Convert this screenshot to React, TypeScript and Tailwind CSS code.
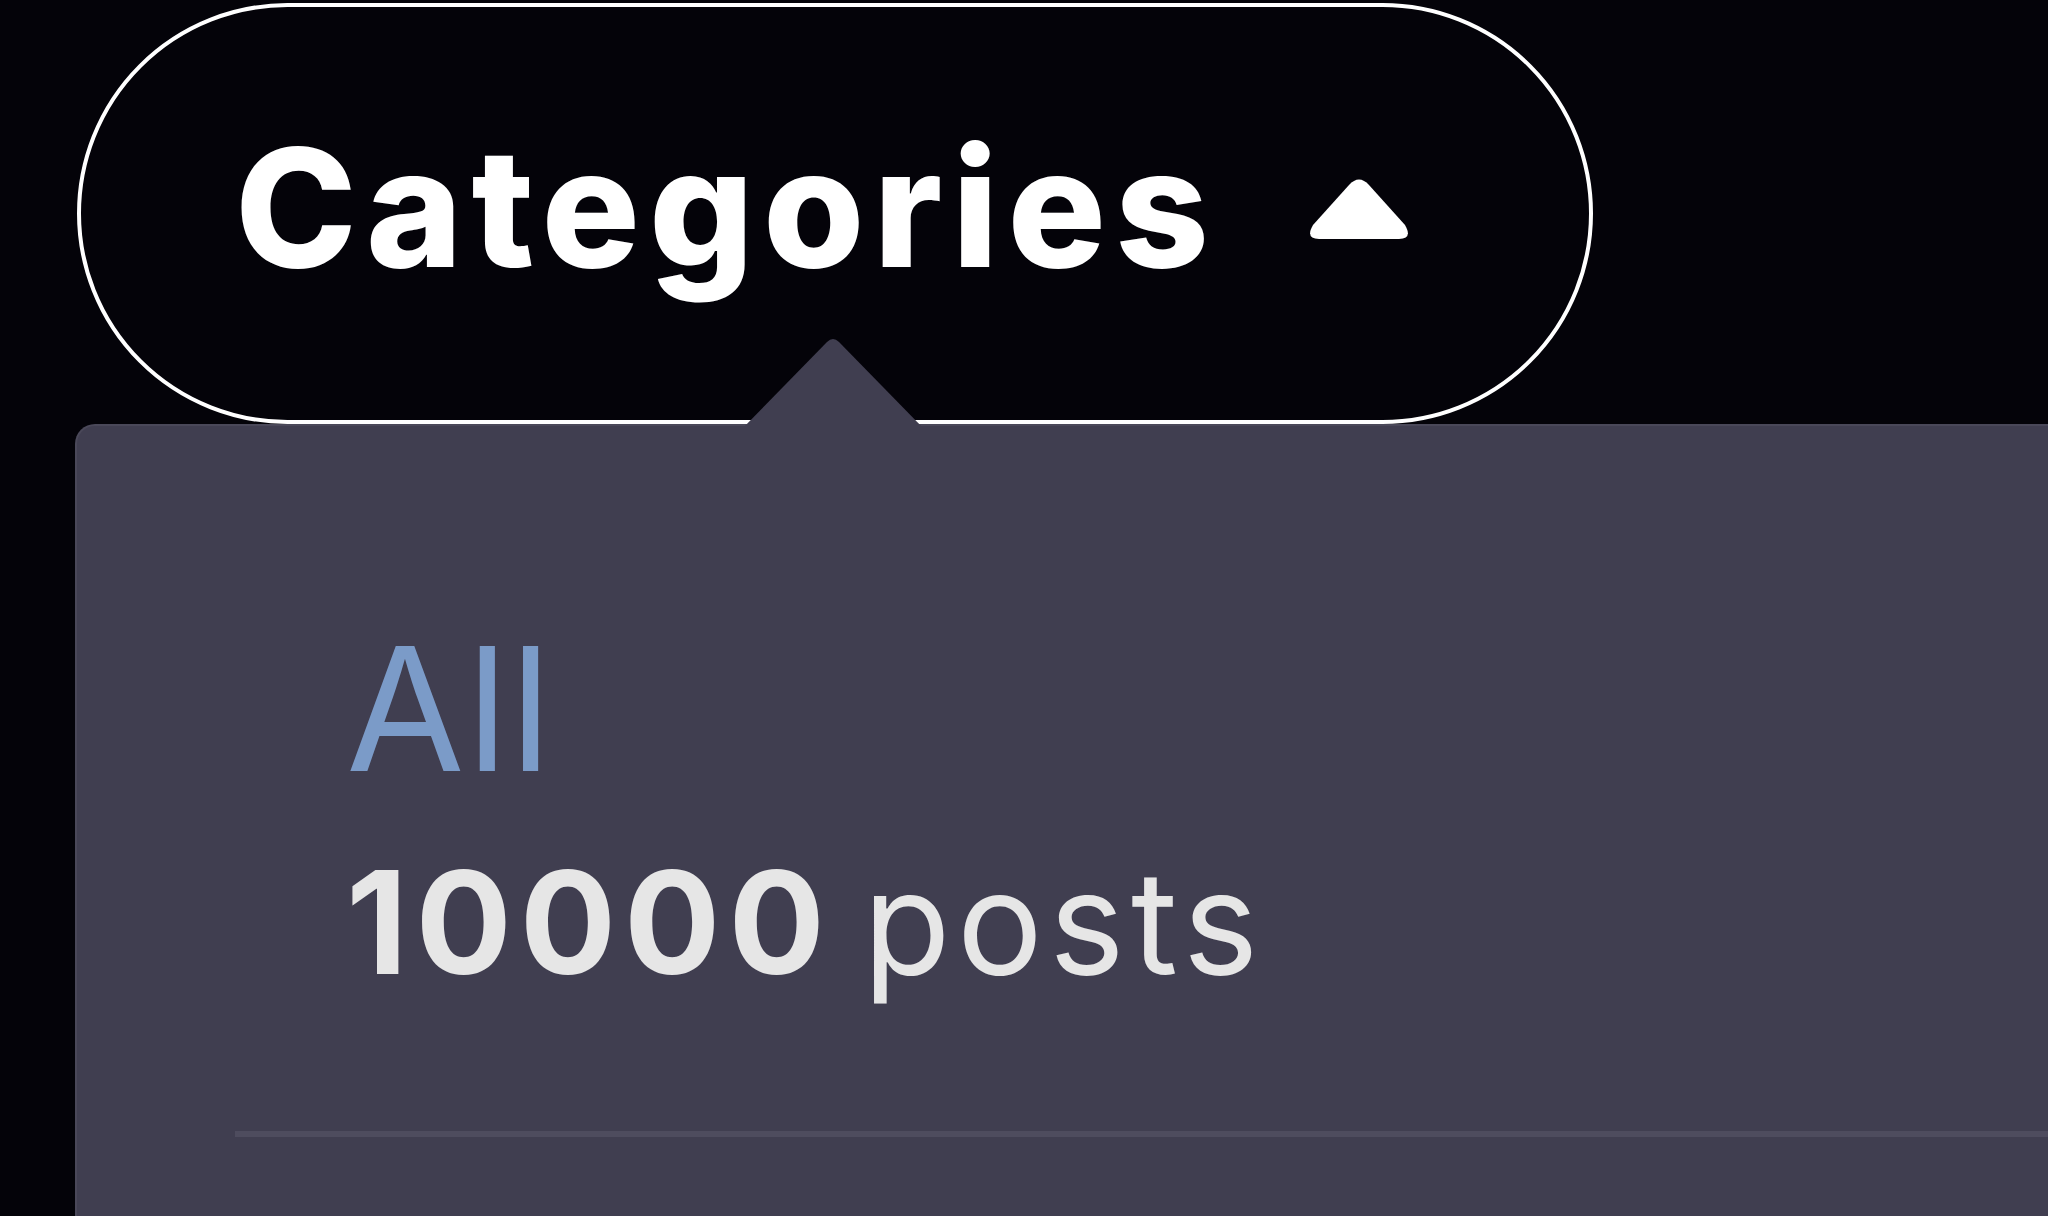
import React from "react";

export default function App() {
  return (
    <div
      className="w-[2048px] h-[1216px] overflow-hidden bg-[#040309] flex flex-col"
      style={{ fontFamily: "Inter, 'Noto Sans', sans-serif" }}
    >
      <div className="pl-[77px] pt-[3px]">
        <button className="w-[1516px] h-[421px] rounded-full border-4 border-white flex items-center pl-[154px] text-white">
          <span className="text-[164px] font-extrabold leading-none tracking-[0.055em] mb-[12px]">Categories</span>
          <svg className="ml-[89px] mb-[8px]" width="104" height="66" viewBox="0 0 104 66">
            <path
              d="M42 8 Q52 -3 62 8 L98 48 Q106 62 92 62 L12 62 Q-2 62 6 48 Z"
              fill="#ffffff"
            />
          </svg>
        </button>
      </div>
      <div className="relative flex-1 ml-[75px]">
        <svg
          className="absolute left-[666px] top-[-86px]"
          width="184"
          height="92"
          viewBox="0 0 184 92"
        >
          <path d="M0 92 L86 4 Q92 -2 98 4 L184 92 Z" fill="#403e50" />
        </svg>
        <div className="w-[2100px] h-full bg-[#403e50] rounded-tl-[20px] border-t-2 border-l-2 border-[#4a4859] pl-[158px] pt-[196px]">
          <div className="pl-[111px] flex flex-col">
            <div className="text-[172px] leading-none text-[#7b9bc8] font-normal tracking-[0.01em]">All</div>
            <div className="mt-[56px] text-[143px] leading-none text-[#e6e6e6]">
              <span className="font-bold tracking-[0.055em]">10000</span>{" "}
              <span className="font-normal tracking-[0.045em] -ml-[10px]">posts</span>
            </div>
          </div>
          <div className="mt-[138px] h-[6px] bg-[#4e4c5e]" />
        </div>
      </div>
    </div>
  );
}
